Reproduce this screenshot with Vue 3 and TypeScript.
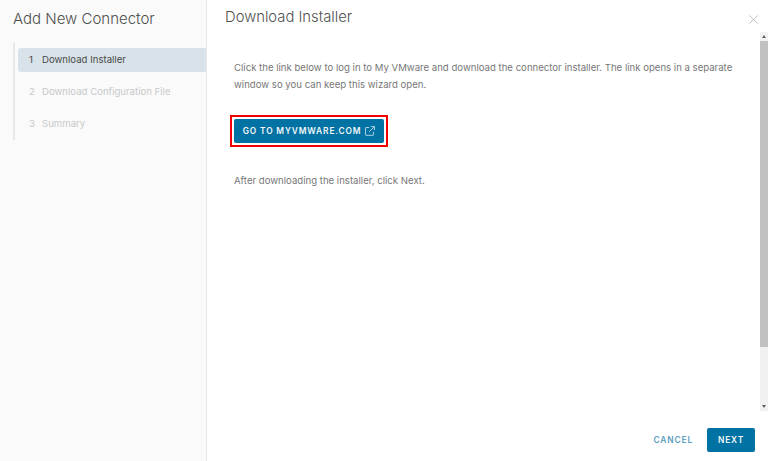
<script setup lang="ts">
const steps: string[] = ['Download Installer', 'Download Configuration File', 'Summary']
</script>

<template>
  <div class="wizard">
    <aside class="side">
      <h1 class="title">Add New Connector</h1>
      <ol class="steps">
        <li v-for="(s, i) in steps" :key="s" class="step" :class="{ active: i === 0 }">
          <span class="num">{{ i + 1 }}</span><span>{{ s }}</span>
        </li>
      </ol>
    </aside>
    <main class="main">
      <div class="content">
        <header class="head">
          <h2 class="heading">Download Installer</h2>
          <svg class="close" viewBox="0 0 10 10" aria-label="Close"><path d="M.5.5l9 9M9.5.5l-9 9" /></svg>
        </header>
        <div class="scroll">
          <div class="body">
            <p class="text">Click the link below to log in to My VMware and download the connector installer. The link opens in a separate window so you can keep this wizard open.</p>
            <div class="highlight">
              <button class="btn primary link">
                GO TO MYVMWARE.COM
                <svg class="ext" viewBox="0 0 12 12"><path d="M5 1.8H1.2a.5.5 0 0 0-.5.5v8.4c0 .3.2.5.5.5h8.4c.3 0 .5-.2.5-.5V7M7 .7h4.3V5M11.2.8L5 7" /></svg>
              </button>
            </div>
            <p class="text after">After downloading the installer, click Next.</p>
          </div>
          <div class="bar">
            <span class="arrow up"></span>
            <span class="thumb"></span>
            <span class="arrow down"></span>
          </div>
        </div>
        <footer class="foot">
          <button class="btn flat">CANCEL</button>
          <button class="btn primary next">NEXT</button>
        </footer>
      </div>
    </main>
  </div>
</template>

<style>
html, body { margin: 0; background: #fff; }
</style>

<style scoped>
.wizard {
  width: 768px;
  height: 461px;
  display: flex;
  overflow: hidden;
  font-family: Inter, "Open Sans", sans-serif;
  color: #565656;
}
.side {
  width: 207px;
  flex: none;
  box-sizing: border-box;
  background: #fafafa;
  border-right: 1px solid #e8e8e8;
  padding: 9px 0 0 13px;
}
.title {
  margin: 0 0 14px;
  font-size: 15px;
  line-height: 20px;
  font-weight: 300;
  color: #4f4f4f;
}
.steps {
  list-style: none;
  margin: 0;
  padding: 5px 0 4px 3px;
  border-left: 2px solid #e8e8e8;
}
.step {
  height: 24px;
  box-sizing: border-box;
  margin-bottom: 8px;
  padding: 0 0 1px 11px;
  display: flex;
  align-items: center;
  font-size: 9.6px;
  color: #c9c9c9;
}
.step:last-child { margin-bottom: 0; }
.step.active {
  background: #d8e3e9;
  color: #4a4a4a;
  border-radius: 3px 0 0 3px;
}
.num { width: 13px; flex: none; }
.main { flex: 1; min-width: 0; }
.content { height: 100%; display: flex; flex-direction: column; }
.head {
  height: 32px;
  flex: none;
  display: flex;
  justify-content: space-between;
  padding: 9px 10px 0 18px;
  box-sizing: border-box;
}
.heading {
  margin: 0;
  font-size: 14.8px;
  line-height: 17px;
  font-weight: 300;
  color: #4f4f4f;
}
.close {
  width: 9px;
  height: 9px;
  margin-top: 6px;
  fill: none;
  stroke: #b8b8b8;
  stroke-width: 1;
}
.scroll { flex: 1; min-height: 0; display: flex; }
.body { flex: 1; padding: 27px 20px 0 27px; min-width: 0; }
.text {
  margin: 0;
  font-size: 9.6px;
  line-height: 17px;
  color: #777;
}
.highlight {
  width: 158px;
  height: 32px;
  box-sizing: border-box;
  margin: 22px 0 0 -4px;
  padding: 2px;
  border: 2px solid #f00000;
  display: flex;
}
.btn {
  font-family: inherit;
  font-weight: 600;
  font-size: 8.4px;
  letter-spacing: .85px;
  border-radius: 2px;
  cursor: pointer;
}
.primary {
  background: #0072a3;
  color: #f2f7fa;
  border: 0;
}
.link {
  flex: 1;
  display: flex;
  align-items: center;
  justify-content: center;
  gap: 4px;
  padding: 0;
}
.ext {
  width: 10px;
  height: 10px;
  fill: none;
  stroke: #cfe3ec;
  stroke-width: 1;
}
.after { margin-top: 25px; }
.bar {
  width: 8px;
  flex: none;
  background: #f1f1f1;
  height: 379px;
  display: flex;
  flex-direction: column;
  align-items: center;
}
.thumb {
  flex: none;
  width: 8px;
  height: 306px;
  background: #c1c1c1;
}
.arrow { width: 0; height: 0; border-left: 2.5px solid transparent; border-right: 2.5px solid transparent; flex: none; }
.up { border-bottom: 3px solid #606060; margin: 3px 0 3px; }
.down { border-top: 3px solid #606060; margin-top: auto; margin-bottom: 3px; }
.foot {
  height: 50px;
  flex: none;
  display: flex;
  justify-content: flex-end;
  gap: 14px;
  padding: 17px 13px 0 0;
  box-sizing: border-box;
}
.flat {
  background: none;
  border: 0;
  padding: 0;
  height: 24px;
  color: #5a9dbd;
}
.next {
  width: 48px;
  height: 24px;
  padding: 0;
}
</style>
